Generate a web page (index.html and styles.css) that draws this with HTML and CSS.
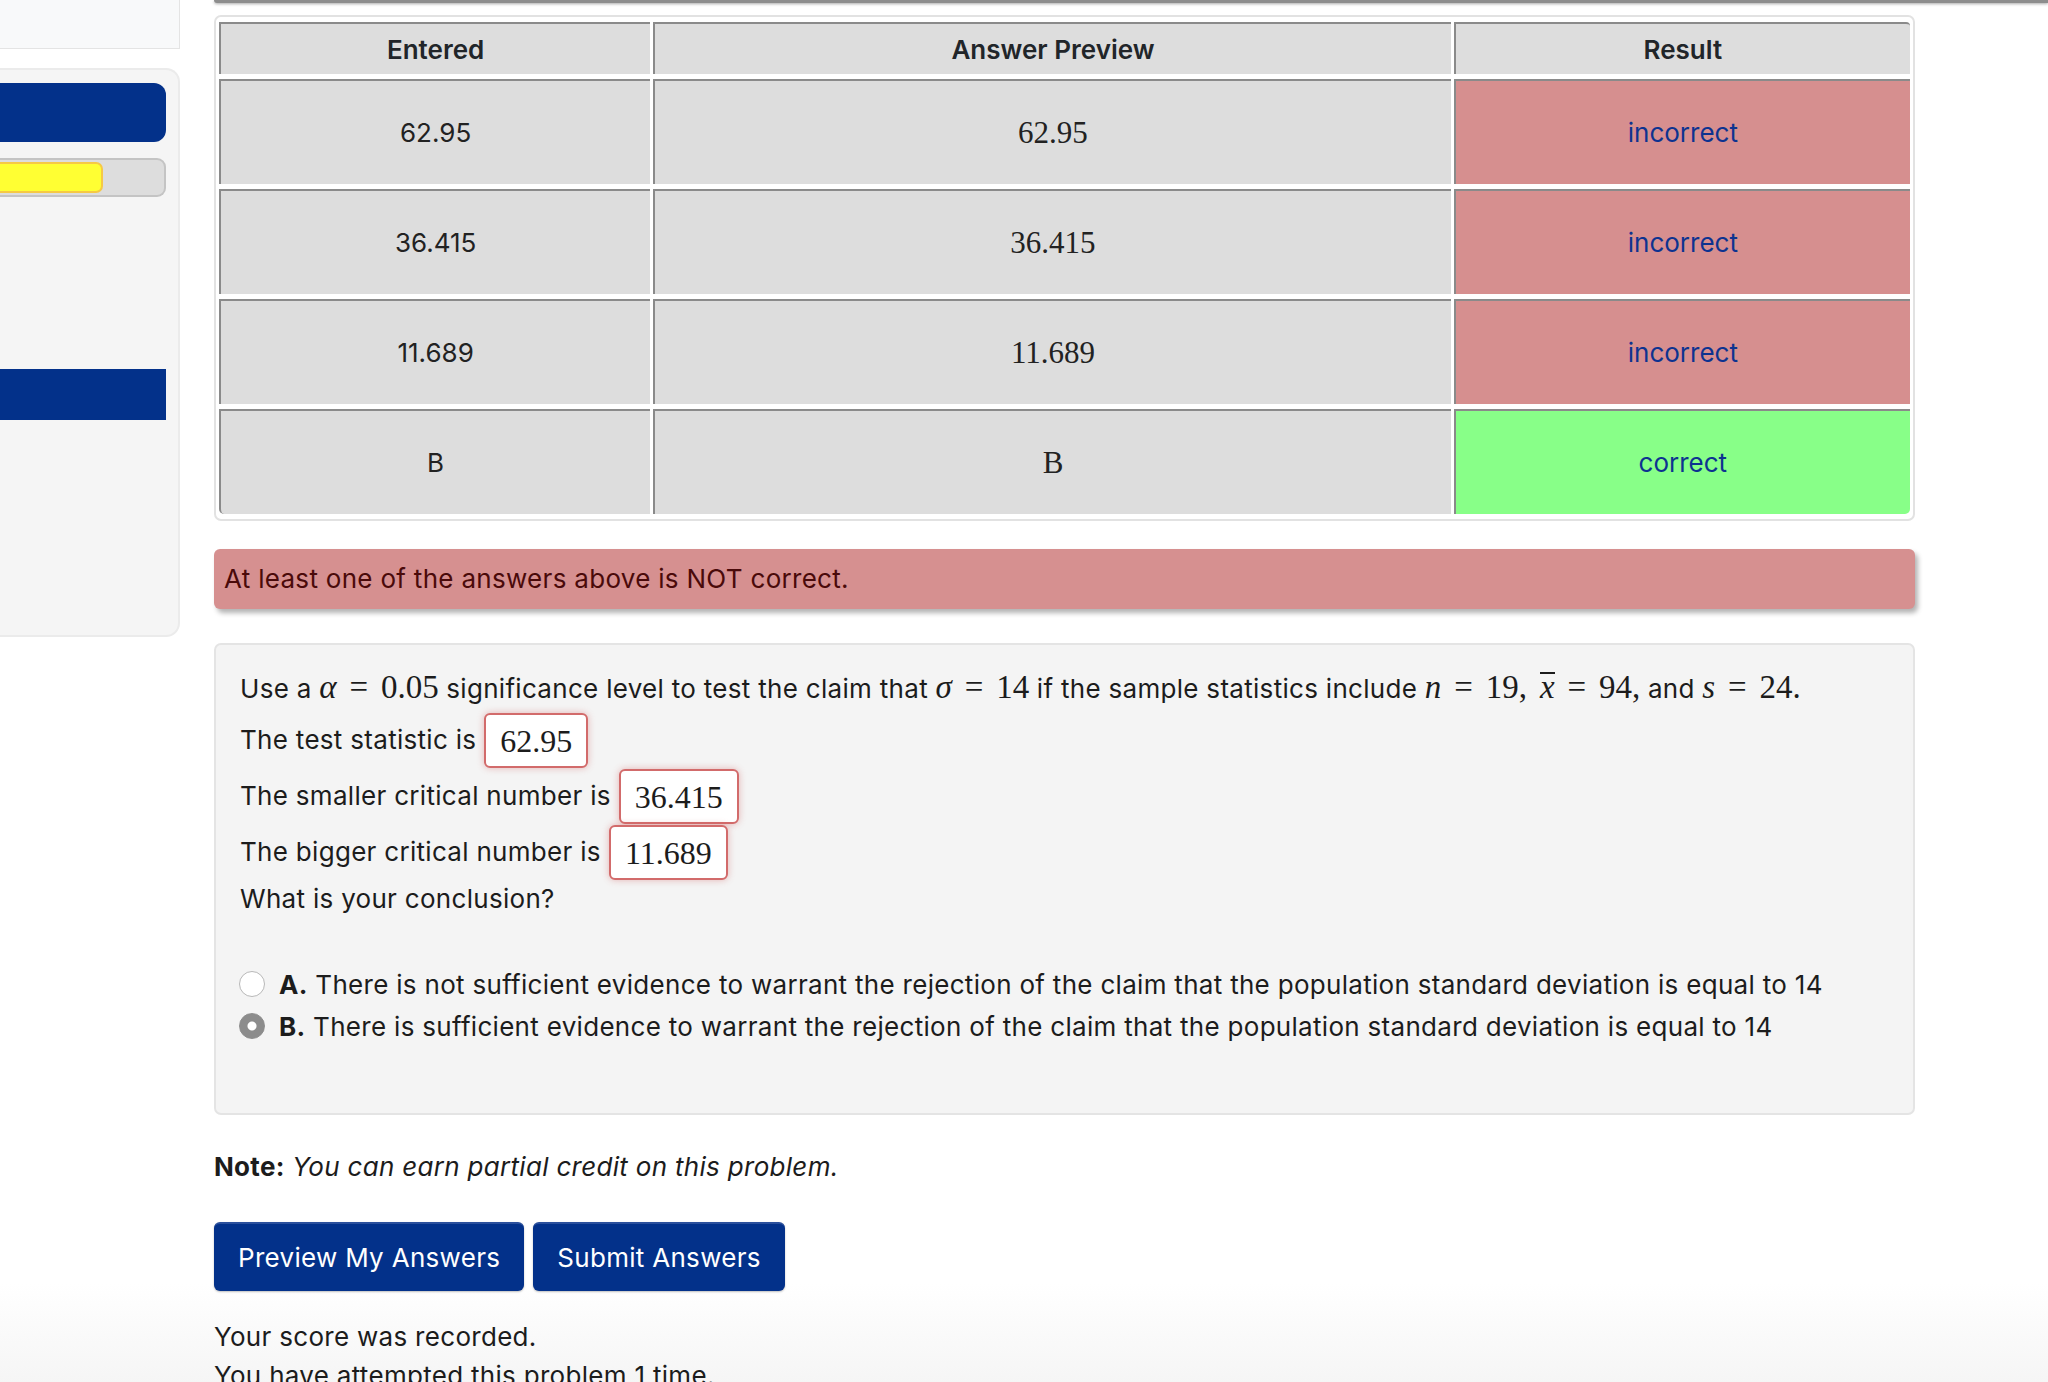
FILE: index.html
```html
<!DOCTYPE html>
<html lang="en">
<head>
    <meta charset="UTF-8">
    <title>Problem</title>
    <link rel="stylesheet" href="styles.css">
</head>
<body>

<div class="page">
    <!-- Left sidebar -->
    <div class="sidebar">
        <div class="side-top"></div>
        <div class="side-card">
            <div class="side-btn"></div>
            <div class="progress"><div class="progress-fill"></div></div>
            <div class="side-bar"></div>
        </div>
    </div>

    <!-- Main column -->
    <div class="main">
        <div class="top-line"></div>

        <div class="content">
            <div class="results-wrap">
                <table class="results">
                    <colgroup>
                        <col class="c-entered">
                        <col class="c-preview">
                        <col class="c-result">
                    </colgroup>
                    <tr>
                        <th>Entered</th>
                        <th>Answer Preview</th>
                        <th>Result</th>
                    </tr>
                    <tr>
                        <td>62.95</td>
                        <td class="math">62.95</td>
                        <td class="bad">incorrect</td>
                    </tr>
                    <tr>
                        <td>36.415</td>
                        <td class="math">36.415</td>
                        <td class="bad">incorrect</td>
                    </tr>
                    <tr>
                        <td>11.689</td>
                        <td class="math">11.689</td>
                        <td class="bad">incorrect</td>
                    </tr>
                    <tr>
                        <td>B</td>
                        <td class="math">B</td>
                        <td class="good">correct</td>
                    </tr>
                </table>
            </div>

            <div class="alert">At least one of the answers above is NOT correct.</div>

            <div class="problem">
                <div class="line">
                    Use a <span class="mj"><i>α</i><span class="eq">=</span>0.05</span> significance level to test the claim that
                    <span class="mj"><i>σ</i><span class="eq">=</span>14</span> if the sample statistics include
                    <span class="mj"><i>n</i><span class="eq">=</span>19,<span class="thin"></span><i class="bar">x</i><span class="eq">=</span>94,</span> and
                    <span class="mj"><i>s</i><span class="eq">=</span>24.</span>
                </div>
                <div class="line box-line">The test statistic is <span class="ans">62.95</span></div>
                <div class="line box-line">The smaller critical number is <span class="ans">36.415</span></div>
                <div class="line box-line">The bigger critical number is <span class="ans">11.689</span></div>
                <div class="line">What is your conclusion?</div>

                <div class="choices">
                    <label class="choice">
                        <input type="radio" name="q4">
                        <span><b>A.</b> There is not sufficient evidence to warrant the rejection of the claim that the population standard deviation is equal to 14</span>
                    </label>
                    <label class="choice">
                        <input type="radio" name="q4" checked>
                        <span><b>B.</b> There is sufficient evidence to warrant the rejection of the claim that the population standard deviation is equal to 14</span>
                    </label>
                </div>
            </div>

            <p class="note"><b>Note:</b> <i>You can earn partial credit on this problem.</i></p>

            <div class="buttons">
                <button class="btn">Preview My Answers</button>
                <button class="btn">Submit Answers</button>
            </div>

            <p class="status">Your score was recorded.</p>
            <p class="status">You have attempted this problem 1 time.</p>
        </div>
    </div>
</div>

</body>
</html>
```

FILE: styles.css
```css
/* Global */
body {
    margin: 0;
    font-family: 'Inter', 'Liberation Sans', sans-serif;
    font-size: 26px;
    letter-spacing: 0.3px;
    color: #1c1c1c;
    background: linear-gradient(to bottom, #ffffff 92%, #f4f4f4 100%);
    min-height: 1382px;
    overflow: hidden;
}

.page {
    display: flex;
    align-items: flex-start;
}

/* Sidebar */
.sidebar {
    width: 180px;
    flex-shrink: 0;
}

.side-top {
    height: 48px;
    background-color: #f8f9fa;
    border-right: 1px solid #e4e4e4;
    border-bottom: 1px solid #e4e4e4;
}

.side-card {
    margin-top: 19px;
    height: 569px;
    background-color: #f5f5f5;
    border: 2px solid #ebebeb;
    border-left: none;
    border-radius: 0 14px 14px 0;
    padding: 13px 12px 0 0;
    box-sizing: border-box;
}

.side-btn {
    height: 59px;
    background-color: #03318a;
    border-radius: 0 12px 12px 0;
}

.progress {
    margin-top: 16px;
    height: 39px;
    background-color: #dddddd;
    border: 2px solid #c4c4c4;
    border-left: none;
    border-radius: 0 9px 9px 0;
    box-sizing: border-box;
    padding: 2px 0;
}

.progress-fill {
    width: 103px;
    height: 100%;
    background-color: #ffff33;
    border: 2px solid #f6c945;
    border-left: none;
    border-radius: 0 7px 7px 0;
    box-sizing: border-box;
}

.side-bar {
    margin-top: 172px;
    height: 51px;
    background-color: #03318a;
}

/* Main column */
.main {
    flex: 1;
    padding-left: 34px;
}

.top-line {
    height: 3px;
    background-color: #8d8d8d;
    box-shadow: 0 1px 3px rgba(0, 0, 0, 0.35);
    border-bottom-left-radius: 3px;
}

.content {
    width: 1701px;
}

/* Results table */
.results-wrap {
    margin-top: 12px;
    border: 2px solid #e2e2e2;
    border-radius: 7px;
}

.results {
    width: 100%;
    border-collapse: separate;
    border-spacing: 3px 5px;
    text-align: center;
    letter-spacing: 0;
}

.c-entered { width: 431px; }
.c-preview { width: 797px; }
.c-result  { width: 456px; }

.results th,
.results td {
    background-color: #dddddd;
    border-top: 2px solid #8a8a8a;
    border-left: 2px solid #8a8a8a;
    padding: 0;
}

.results th {
    height: 50px;
    font-weight: 600;
    color: #212529;
}

.results td {
    height: 103px;
    color: #222;
}

.results td.math {
    font-family: 'Liberation Serif', serif;
    font-size: 31px;
}

.results td.bad {
    background-color: #d68f8f;
    color: #0d3390;
}

.results td.good {
    background-color: #88ff88;
    color: #0d3390;
}

.results tr:first-child th:last-child { border-top-right-radius: 4px; }
.results tr:last-child td:last-child { border-bottom-right-radius: 5px; }
.results tr:last-child td:first-child { border-bottom-left-radius: 5px; }

/* Alert */
.alert {
    margin-top: 28px;
    height: 60px;
    line-height: 60px;
    padding-left: 10px;
    background-color: #d69090;
    color: #4a0a0a;
    border-radius: 6px;
    box-shadow: 3px 4px 5px rgba(0, 0, 0, 0.3);
}

/* Problem box */
.problem {
    margin-top: 34px;
    background-color: #f4f4f4;
    border: 2px solid #e4e4e4;
    border-radius: 7px;
    padding: 23px 24px 66px 24px;
}

.line {
    line-height: 38px;
}

.box-line {
    height: 56px;
    display: flex;
    align-items: center;
}

.problem > .line:first-child {
    margin-bottom: 4px;
}

.mj {
    font-family: 'Liberation Serif', serif;
    font-size: 33px;
    letter-spacing: 0;
}

.mj .eq {
    margin: 0 0.39em;
}

.mj .thin {
    display: inline-block;
    width: 0.4em;
}

.bar {
    display: inline-block;
    line-height: 0.62;
    padding-top: 3px;
    border-top: 2px solid #1c1c1c;
}

.ans {
    display: inline-block;
    margin-left: 8px;
    padding: 0 14px;
    height: 51px;
    line-height: 53px;
    background-color: #ffffff;
    border: 2px solid #d26b6b;
    border-radius: 6px;
    box-shadow: 0 0 7px rgba(210, 100, 100, 0.45);
    font-family: 'Liberation Serif', serif;
    font-size: 32px;
    letter-spacing: 0;
}

/* Choices */
.choices {
    margin-top: 45px;
}

.choice {
    display: flex;
    align-items: center;
    height: 42px;
    margin-left: -1px;
}

.choice input {
    appearance: none;
    -webkit-appearance: none;
    margin: 0 14px 0 0;
    width: 26px;
    height: 26px;
    border-radius: 50%;
    border: 1.5px solid #b8b8b8;
    background-color: #ffffff;
    flex-shrink: 0;
}

.choice input:checked {
    background: radial-gradient(circle, #ffffff 0 4px, #8c8c8c 5px);
    border-color: #8c8c8c;
}

/* Note, buttons, status */
.note {
    margin: 33px 0 0 0;
    line-height: 38px;
}

.note b {
    font-weight: 700;
}

.buttons {
    margin-top: 36px;
    display: flex;
    gap: 9px;
}

.btn {
    height: 69px;
    padding: 0 24px;
    background-color: #03318a;
    color: #ffffff;
    border: none;
    border-top: 2px solid #2a4f9c;
    border-radius: 6px;
    font-family: inherit;
    font-size: 26px;
    letter-spacing: 0.3px;
    box-shadow: 0 1px 2px rgba(0, 0, 0, 0.25);
}

.status {
    margin: 0;
    line-height: 39px;
}

.buttons + .status {
    margin-top: 26px;
}
```
